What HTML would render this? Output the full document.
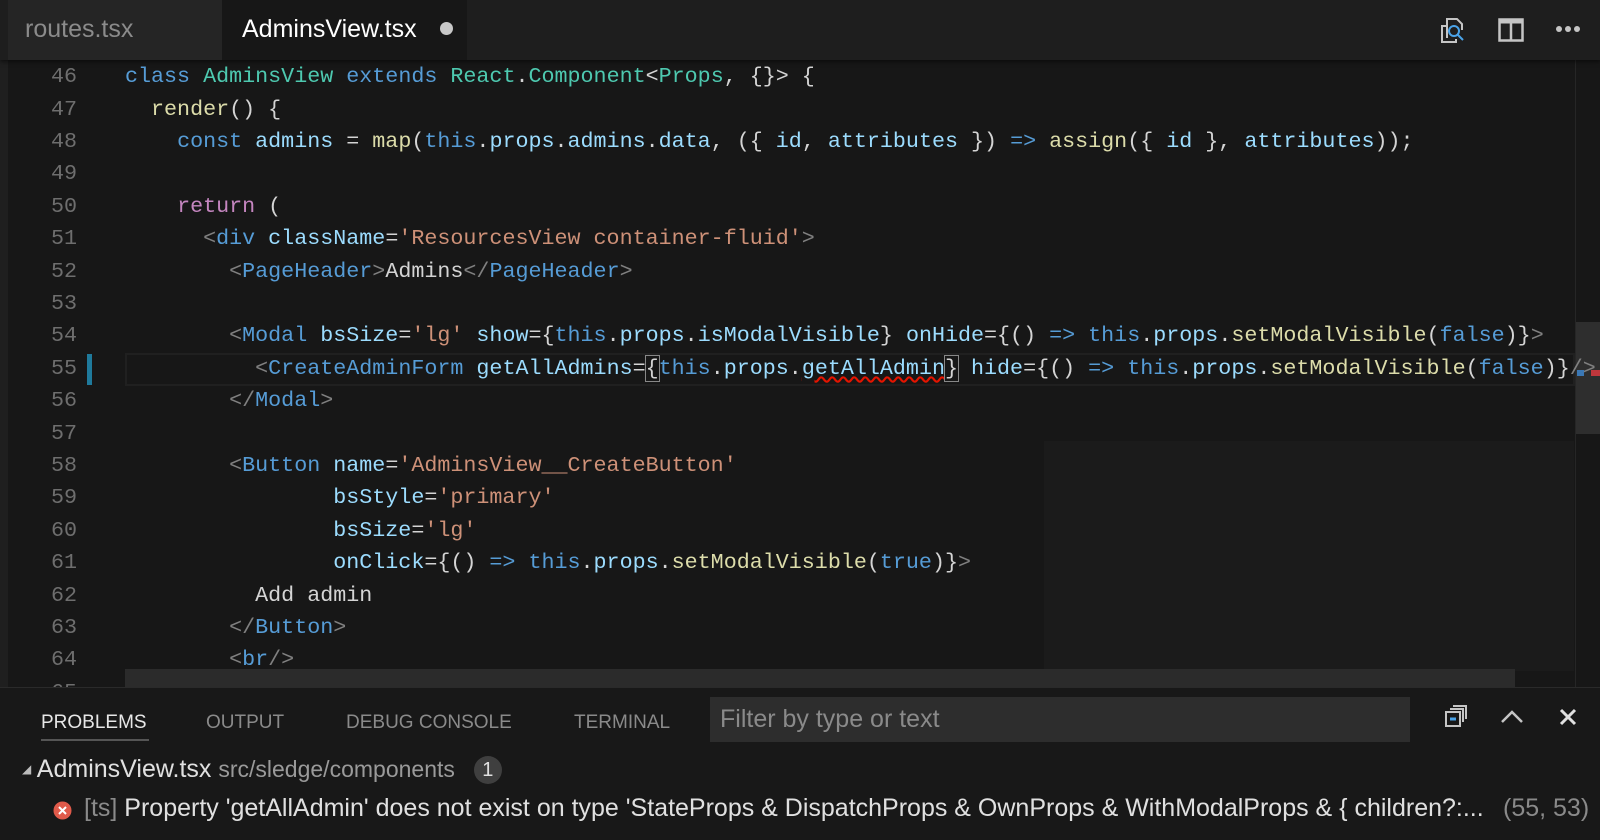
<!DOCTYPE html>
<html><head><meta charset="utf-8"><style>
*{margin:0;padding:0;box-sizing:border-box}
body{width:1600px;height:840px;background:#171717;overflow:hidden;position:relative;font-family:"Liberation Sans",sans-serif}
.tabs{position:absolute;left:0;top:0;width:1600px;height:60px;background:#1e1e1e;box-shadow:0 2px 4px rgba(0,0,0,.5);z-index:3}
.tab{position:absolute;top:0;height:60px;font-size:25px;line-height:58px;padding-left:17px;white-space:nowrap}
.ed{position:absolute;left:0;top:60px;width:1600px;height:627px;overflow:hidden}
.ln{position:absolute;left:0;width:77px;text-align:right;font-family:"Liberation Mono",monospace;font-size:21.7px;color:#6e6e6e;line-height:32px}
.cl{position:absolute;left:125px;font-family:"Liberation Mono",monospace;font-size:21.7px;color:#d4d4d4;line-height:32px;white-space:pre}
.k{color:#569cd6}.c{color:#4ec9b0}.f{color:#dcdcaa}.v{color:#9cdcfe}.s{color:#ce9178}.g{color:#808080}.r{color:#c586c0}
.panel{position:absolute;left:0;top:687px;width:1600px;height:153px;background:#181818;border-top:1px solid #2a2a2a;overflow:hidden}
.pt{position:absolute;top:24px;font-size:19px;color:#8a8a8a}
</style></head><body>
<div class="tabs">
 <div class="tab" style="left:8px;width:214px;background:#252525;color:#8b8b8b">routes.tsx</div>
 <div class="tab" style="left:222px;width:245px;background:#171717;color:#fff;padding-left:20px">AdminsView.tsx <span style="display:inline-block;width:13px;height:13px;border-radius:50%;background:#c8c8c8;margin-left:16px;vertical-align:2px"></span></div>
 <svg style="position:absolute;left:1438px;top:16px" width="30" height="30" viewBox="0 0 30 30" fill="none" stroke="#c5c5c5" stroke-width="2"><path d="M9 10H4v16h14v-3"/><path d="M9 22V3h10l5 5v6"/><circle cx="16" cy="15" r="5" stroke="#4aa3e8"/><path d="M20 19l5 5" stroke="#4aa3e8"/></svg>
 <svg style="position:absolute;left:1498px;top:18px" width="26" height="24" viewBox="0 0 26 24" fill="none" stroke="#c5c5c5" stroke-width="2.5"><rect x="1.5" y="1.5" width="23" height="21"/><path d="M13 2v20"/><path d="M2 4h22" stroke-width="3"/></svg>
 <svg style="position:absolute;left:1555px;top:25px" width="26" height="8"><circle cx="4" cy="4" r="3" fill="#c5c5c5"/><circle cx="13" cy="4" r="3" fill="#c5c5c5"/><circle cx="22" cy="4" r="3" fill="#c5c5c5"/></svg>
</div>
<div class="ed">
 <div style="position:absolute;left:0;top:0;width:8px;height:627px;background:#1f1f1f"></div>
 <div style="position:absolute;left:1044px;top:381px;width:530px;height:230px;background:#1b1b1b"></div>
 <div style="position:absolute;left:1575px;top:0;width:1px;height:627px;background:#262626"></div>
 <div style="position:absolute;left:1576px;top:262px;width:24px;height:112px;background:#2e2e2e"></div>
 <div style="position:absolute;left:125px;top:293px;width:1450px;height:33px;border:2px solid #202020"></div>
 <div style="position:absolute;left:87px;top:294px;width:5px;height:31px;background:#1f7a9c"></div>
 <div style="position:absolute;left:1577px;top:310px;width:7px;height:6px;background:#3b78b5"></div>
 <div style="position:absolute;left:1591px;top:310px;width:9px;height:6px;background:#c0373c"></div>
 <div class="ln" style="top:1px">46</div><div class="ln" style="top:34px">47</div><div class="ln" style="top:66px">48</div><div class="ln" style="top:98px">49</div><div class="ln" style="top:131px">50</div><div class="ln" style="top:163px">51</div><div class="ln" style="top:196px">52</div><div class="ln" style="top:228px">53</div><div class="ln" style="top:260px">54</div><div class="ln" style="top:293px">55</div><div class="ln" style="top:325px">56</div><div class="ln" style="top:358px">57</div><div class="ln" style="top:390px">58</div><div class="ln" style="top:422px">59</div><div class="ln" style="top:455px">60</div><div class="ln" style="top:487px">61</div><div class="ln" style="top:520px">62</div><div class="ln" style="top:552px">63</div><div class="ln" style="top:584px">64</div><div class="ln" style="top:617px">65</div>
 <div class="cl" style="top:1px"><span class="k">class</span> <span class="c">AdminsView</span> <span class="k">extends</span> <span class="c">React</span>.<span class="c">Component</span>&lt;<span class="c">Props</span>, {}&gt; {</div>
 <div class="cl" style="top:34px">  <span class="f">render</span>() {</div>
 <div class="cl" style="top:66px">    <span class="k">const</span> <span class="v">admins</span> = <span class="f">map</span>(<span class="k">this</span>.<span class="v">props</span>.<span class="v">admins</span>.<span class="v">data</span>, ({ <span class="v">id</span>, <span class="v">attributes</span> }) <span class="k">=&gt;</span> <span class="f">assign</span>({ <span class="v">id</span> }, <span class="v">attributes</span>));</div>
 <div class="cl" style="top:131px">    <span class="r">return</span> (</div>
 <div class="cl" style="top:163px">      <span class="g">&lt;</span><span class="k">div</span> <span class="v">className</span>=<span class="s">'ResourcesView container-fluid'</span><span class="g">&gt;</span></div>
 <div class="cl" style="top:196px">        <span class="g">&lt;</span><span class="k">PageHeader</span><span class="g">&gt;</span>Admins<span class="g">&lt;/</span><span class="k">PageHeader</span><span class="g">&gt;</span></div>
 <div class="cl" style="top:260px">        <span class="g">&lt;</span><span class="k">Modal</span> <span class="v">bsSize</span>=<span class="s">'lg'</span> <span class="v">show</span>={<span class="k">this</span>.<span class="v">props</span>.<span class="v">isModalVisible</span>} <span class="v">onHide</span>={() <span class="k">=&gt;</span> <span class="k">this</span>.<span class="v">props</span>.<span class="f">setModalVisible</span>(<span class="k">false</span>)}<span class="g">&gt;</span></div>
 <div class="cl" style="top:293px">          <span class="g">&lt;</span><span class="k">CreateAdminForm</span> <span class="v">getAllAdmins</span>=<span style="outline:1px solid #888">{</span><span class="k">this</span>.<span class="v">props</span>.<span class="v" style="text-decoration:underline wavy #e51400">getAllAdmin</span><span style="outline:1px solid #888">}</span> <span class="v">hide</span>={() <span class="k">=&gt;</span> <span class="k">this</span>.<span class="v">props</span>.<span class="f">setModalVisible</span>(<span class="k">false</span>)}<span class="g">/&gt;</span></div>
 <div class="cl" style="top:325px">        <span class="g">&lt;/</span><span class="k">Modal</span><span class="g">&gt;</span></div>
 <div class="cl" style="top:390px">        <span class="g">&lt;</span><span class="k">Button</span> <span class="v">name</span>=<span class="s">'AdminsView__CreateButton'</span></div>
 <div class="cl" style="top:422px">                <span class="v">bsStyle</span>=<span class="s">'primary'</span></div>
 <div class="cl" style="top:455px">                <span class="v">bsSize</span>=<span class="s">'lg'</span></div>
 <div class="cl" style="top:487px">                <span class="v">onClick</span>={() <span class="k">=&gt;</span> <span class="k">this</span>.<span class="v">props</span>.<span class="f">setModalVisible</span>(<span class="k">true</span>)}<span class="g">&gt;</span></div>
 <div class="cl" style="top:520px">          Add admin</div>
 <div class="cl" style="top:552px">        <span class="g">&lt;/</span><span class="k">Button</span><span class="g">&gt;</span></div>
 <div class="cl" style="top:584px">        <span class="g">&lt;</span><span class="k">br</span><span class="g">/&gt;</span></div>
 <div style="position:absolute;left:125px;top:609px;width:1390px;height:18px;background:#2b2b2b"></div>
</div>
<div class="panel">
 <div class="pt" style="left:41px;color:#e7e7e7">PROBLEMS</div>
 <div style="position:absolute;left:41px;top:51px;width:108px;height:2px;background:#555"></div>
 <div class="pt" style="left:206px">OUTPUT</div>
 <div class="pt" style="left:346px">DEBUG CONSOLE</div>
 <div class="pt" style="left:574px">TERMINAL</div>
 <div style="position:absolute;left:710px;top:9px;width:700px;height:45px;background:#2d2d2d;color:#8a8a8a;font-size:25px;line-height:45px;padding-left:10px">Filter by type or text</div>
 <svg style="position:absolute;left:1444px;top:16px" width="24" height="24" viewBox="0 0 24 24" fill="none" stroke="#c5c5c5" stroke-width="2"><rect x="2" y="8" width="14" height="14"/><path d="M6 5h13v13M9 2h13v13"/><path d="M6 15h6" stroke="#4aa3e8" stroke-width="3"/></svg>
 <svg style="position:absolute;left:1500px;top:20px" width="24" height="16"><path d="M2 14L12 4l10 10" fill="none" stroke="#c5c5c5" stroke-width="2.5"/></svg>
 <svg style="position:absolute;left:1559px;top:20px" width="18" height="18"><path d="M2 2l14 14M16 2L2 16" stroke="#e0e0e0" stroke-width="3"/></svg>
 <div style="position:absolute;left:22px;top:67px;font-size:25px;color:#e0e0e0;white-space:nowrap"><span style="font-size:12px;color:#bbb;vertical-align:4px">◢</span> AdminsView.tsx <span style="font-size:23px;color:#9a9a9a">src/sledge/components</span> <span style="display:inline-block;background:#3f3f3f;border-radius:14px;width:28px;height:28px;text-align:center;line-height:28px;font-size:20px;margin-left:12px;vertical-align:1px">1</span></div>
 <svg style="position:absolute;left:53px;top:113px" width="19" height="19"><circle cx="9.5" cy="9.5" r="9" fill="#e05a4a"/><path d="M6 6l7 7M13 6l-7 7" stroke="#fff" stroke-width="2"/></svg>
 <div style="position:absolute;left:84px;top:106px;font-size:25px;color:#e0e0e0;white-space:nowrap"><span style="color:#8a8a8a">[ts]</span> Property 'getAllAdmin' does not exist on type 'StateProps &amp; DispatchProps &amp; OwnProps &amp; WithModalProps &amp; { children?:...</div>
 <div style="position:absolute;left:1493px;top:106px;font-size:25px;color:#8a8a8a;background:#181818;padding-left:10px;padding-right:20px;white-space:nowrap">(55, 53)</div>
</div>
</body></html>
